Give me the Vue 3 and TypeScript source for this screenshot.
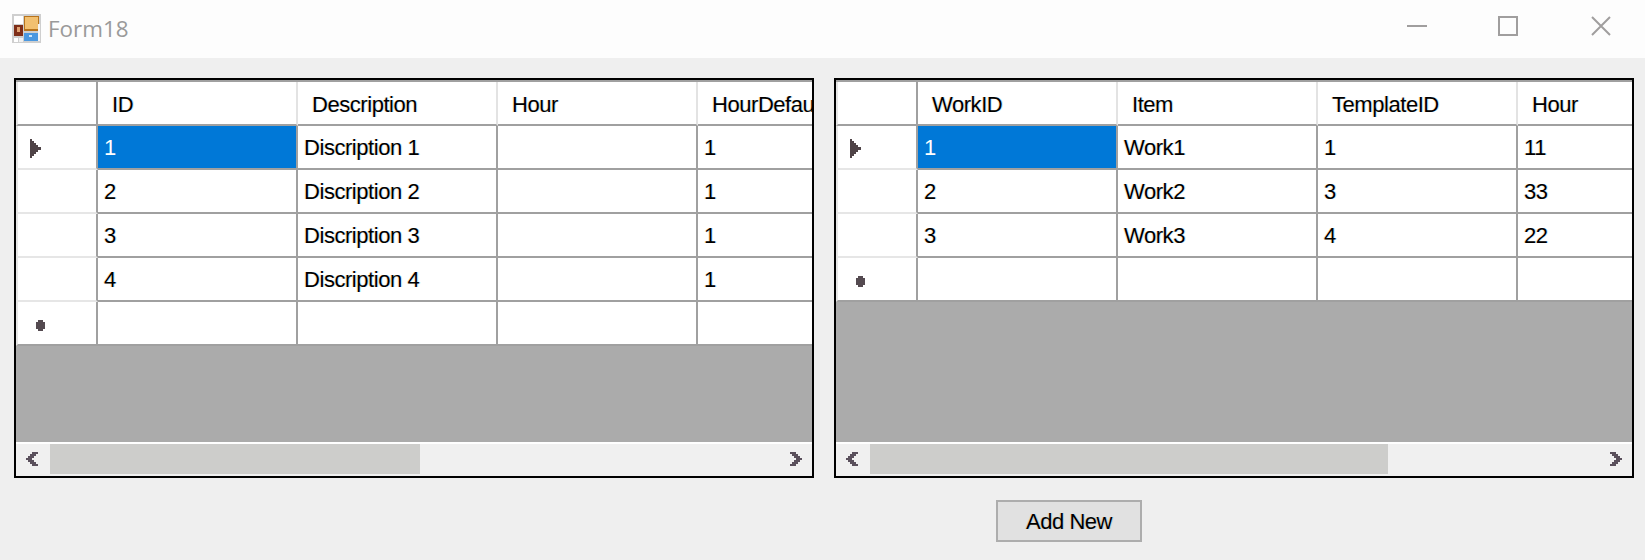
<script setup lang="ts">
interface GridData {
  columns: string[]
  rows: string[][]
  thumb: string
}

const grids: GridData[] = [
  {
    columns: ['ID', 'Description', 'Hour', 'HourDefault'],
    rows: [
      ['1', 'Discription 1', '', '1'],
      ['2', 'Discription 2', '', '1'],
      ['3', 'Discription 3', '', '1'],
      ['4', 'Discription 4', '', '1'],
    ],
    thumb: '370px',
  },
  {
    columns: ['WorkID', 'Item', 'TemplateID', 'Hour'],
    rows: [
      ['1', 'Work1', '1', '11'],
      ['2', 'Work2', '3', '33'],
      ['3', 'Work3', '4', '22'],
    ],
    thumb: '518px',
  },
]
</script>

<template>
  <div class="window">
    <header class="titlebar">
      <svg class="app-icon" width="29" height="29" viewBox="0 0 29 29">
        <rect width="29" height="29" fill="#cfcfcf" />
        <rect x="2" y="2" width="9" height="8" fill="#ffffff" />
        <rect x="12" y="2" width="15" height="15" fill="#b8741c" />
        <rect x="13" y="3" width="13" height="12" fill="#f2c070" />
        <rect x="2" y="11" width="9" height="11" fill="#7e2e18" />
        <rect x="5" y="13" width="3" height="5" fill="#e0a070" />
        <rect x="12" y="19" width="14" height="8" fill="#4a98e0" />
        <rect x="17" y="21" width="3" height="2" fill="#cfe6fa" />
        <rect x="2" y="24" width="4" height="4" fill="#ffffff" />
        <rect x="7" y="24" width="4" height="4" fill="#f0f0f0" />
        <rect x="26" y="10" width="2" height="17" fill="#f4f4f4" />
      </svg>
      <span class="title">Form18</span>
      <div class="controls">
        <svg width="20" height="20" viewBox="0 0 20 20"><rect y="9" width="20" height="2" fill="#a09e9e" /></svg>
        <svg width="20" height="20" viewBox="0 0 20 20"><rect x="1" y="1" width="18" height="18" fill="none" stroke="#a09e9e" stroke-width="2" /></svg>
        <svg class="close" width="20" height="20" viewBox="0 0 20 20"><path d="M1 1 19 19M19 1 1 19" stroke="#a09e9e" stroke-width="2" fill="none" /></svg>
      </div>
    </header>

    <main class="grids">
      <section v-for="grid in grids" :key="grid.columns[0]" class="grid">
        <div class="viewport">
          <div class="row header-row">
            <div class="row-head"></div>
            <div v-for="col in grid.columns" :key="col" class="col-head">{{ col }}</div>
          </div>
          <div v-for="(row, r) in grid.rows" :key="r" class="row">
            <div class="row-head">
              <svg v-if="r === 0" class="marker" width="11" height="19" viewBox="0 0 11 19">
                <path d="M0 0H2V2H4V4H6V6H8V8H11V11H8V13H6V15H4V17H2V19H0Z" fill="#4f4347" />
              </svg>
            </div>
            <div
              v-for="(cell, c) in row"
              :key="c"
              class="cell"
              :class="{ selected: r === 0 && c === 0 }"
            >{{ cell }}</div>
          </div>
          <div class="row">
            <div class="row-head last">
              <svg class="marker dot" width="9" height="12" viewBox="0 0 9 12">
                <path d="M2 0H7V2H9V9H7V11H2V9H0V2H2Z" fill="#544a50" />
              </svg>
            </div>
            <div v-for="col in grid.columns" :key="col" class="cell"></div>
          </div>
        </div>
        <div class="scrollbar">
          <div class="arrow">
            <svg width="12" height="14" viewBox="0 0 12 14">
              <path d="M6 0H12V2H10V4H8V6H6V8H8V10H10V12H12V14H6V12H4V10H2V8H0V6H2V4H4V2H6Z" fill="#5a505c" />
            </svg>
          </div>
          <div class="thumb" :style="{ width: grid.thumb }"></div>
          <div class="arrow end">
            <svg width="12" height="14" viewBox="0 0 12 14">
              <path d="M0 0H6V2H8V4H10V6H12V8H10V10H8V12H6V14H0V12H2V10H4V8H6V6H4V4H2V2H0Z" fill="#5a505c" />
            </svg>
          </div>
        </div>
      </section>
    </main>

    <footer class="actions">
      <button class="add" type="button">Add New</button>
    </footer>
  </div>
</template>

<style>
html,
body {
  margin: 0;
  background: #efefef;
}
</style>

<style scoped>
.window {
  width: 1645px;
  height: 560px;
  overflow: hidden;
  background: #efefef;
  font-family: "Liberation Sans", Arial, sans-serif;
  font-size: 22px;
  letter-spacing: -0.45px;
  color: #000;
}

.titlebar {
  height: 58px;
  background: #fdfdfd;
  display: flex;
  align-items: center;
  padding-left: 12px;
  box-sizing: border-box;
}

.app-icon {
  margin-top: -2px;
  filter: blur(0.5px);
}

.title {
  margin-left: 7px;
  margin-top: -2px;
  font-family: "Open Sans", sans-serif;
  font-size: 22.4px;
  letter-spacing: 0;
  color: #9a9a9a;
}

.controls {
  margin-left: auto;
  display: flex;
  gap: 71px;
  padding-right: 34px;
  margin-top: -6px;
}

.controls svg {
  display: block;
}

.controls .close {
  margin-left: 2px;
}

.grids {
  display: flex;
  gap: 20px;
  padding: 20px 0 0 14px;
}

.grid {
  width: 800px;
  height: 400px;
  box-sizing: border-box;
  border: 2px solid #000;
  display: flex;
  flex-direction: column;
}

.viewport {
  flex: 1;
  min-height: 0;
  overflow: hidden;
  background: #ababab;
  border-top: 2px solid #a0a0a0;
}

.row {
  display: grid;
  grid-template-columns: 82px repeat(4, 200px);
  height: 44px;
  text-shadow: -1px 0 rgba(255, 170, 70, 0.3), 1px 0 rgba(70, 190, 255, 0.3);
}

.row-head,
.col-head,
.cell {
  box-sizing: border-box;
  height: 44px;
  background: #fff;
  display: flex;
  align-items: center;
  border-right: 2px solid #a0a0a0;
  border-bottom: 2px solid #a0a0a0;
  white-space: nowrap;
}

.row-head {
  border-left: 2px solid #e6e6e6;
  border-bottom-color: #e6e6e6;
  padding-left: 12px;
}

.header-row .row-head,
.row-head.last {
  border-bottom-color: #a0a0a0;
}

.col-head {
  padding: 3px 0 0 14px;
  border-right-color: #e3e3e3;
}

.cell {
  padding: 2px 0 0 6px;
}

.cell.selected {
  background: #0078d7;
  color: #fff;
  text-shadow: none;
}

.marker {
  display: block;
  margin-top: 2px;
}

.marker.dot {
  margin: 6px 0 0 6px;
}

.scrollbar {
  flex: none;
  height: 34px;
  box-sizing: border-box;
  border-top: 2px solid #fff;
  background: #f0f0f0;
  display: flex;
}

.arrow {
  width: 34px;
  height: 30px;
  display: flex;
  align-items: center;
  padding-left: 10px;
  box-sizing: border-box;
}

.arrow svg {
  display: block;
}

.arrow.end {
  margin-left: auto;
  padding-left: 12px;
}

.thumb {
  height: 30px;
  background: #cdcdcb;
}

.actions {
  padding: 22px 0 0 996px;
}

.add {
  display: block;
  width: 146px;
  height: 42px;
  box-sizing: border-box;
  border: 2px solid #adadad;
  border-radius: 0;
  background: #e1e1e1;
  color: #000;
  font: inherit;
  letter-spacing: inherit;
  padding: 2px 0 0;
  text-shadow: -1px 0 rgba(255, 170, 70, 0.3), 1px 0 rgba(70, 190, 255, 0.3);
}
</style>
